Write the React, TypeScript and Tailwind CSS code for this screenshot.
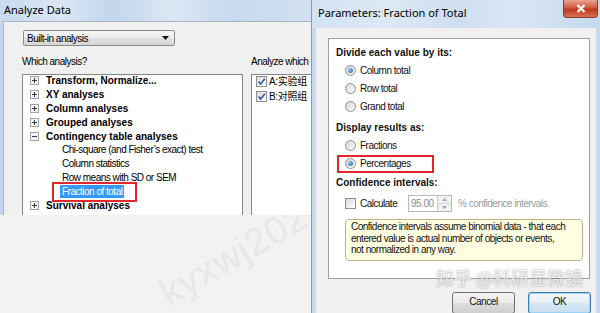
import React from 'react';

const ui = "font-['Liberation_Sans','Noto_Sans_CJK_SC',sans-serif]";

const PlusBox = ({ open }: { open?: boolean }) => (
  <svg width="9" height="9" viewBox="0 0 9 9" className="shrink-0">
    <rect x="0.5" y="0.5" width="8" height="8" fill="#f4f4f4" stroke="#a3a3a3" />
    <line x1="2" y1="4.5" x2="7" y2="4.5" stroke="#3a3a3a" />
    {!open && <line x1="4.5" y1="2" x2="4.5" y2="7" stroke="#3a3a3a" />}
  </svg>
);

const Radio = ({ checked }: { checked?: boolean }) => (
  <span className="flex h-[11px] w-[11px] shrink-0 items-center justify-center rounded-full border border-[#8e8f8f] bg-[linear-gradient(135deg,#d6d6d6,#fbfbfb)]">
    {checked && (
      <span className="h-[5px] w-[5px] rounded-full bg-[radial-gradient(circle_at_35%_35%,#8fc4f5,#1c5aa6)]" />
    )}
  </span>
);

const Check = ({ checked }: { checked?: boolean }) => (
  <span className="flex h-[11px] w-[11px] shrink-0 items-center justify-center border border-[#8e8f8f] bg-[linear-gradient(135deg,#d9d9d9,#ffffff)]">
    {checked && (
      <svg width="9" height="9" viewBox="0 0 9 9">
        <path d="M1.5 4.5 L3.7 7 L7.8 1.8" fill="none" stroke="#2a5aa8" strokeWidth="1.6" />
      </svg>
    )}
  </span>
);

const groups = [
  { label: 'Transform, Normalize...' },
  { label: 'XY analyses' },
  { label: 'Column analyses' },
  { label: 'Grouped analyses' },
  {
    label: 'Contingency table analyses',
    open: true,
    children: ['Chi-square (and Fisher\u2019s exact) test', 'Column statistics', 'Row means with SD or SEM', 'Fraction of total'],
  },
  { label: 'Survival analyses' },
];

const AnalyzeWindow = () => (
  <div className="absolute left-0 top-0 flex h-[215px] w-[330px] flex-col overflow-hidden">
    <div className="flex h-[21px] shrink-0 items-center pl-[4px] bg-[linear-gradient(90deg,#c6d9ee_0%,#dbe7f4_18%,#c1d5eb_34%,#dce8f5_52%,#c6d9ee_70%,#d5e3f2_100%)]">
      <span className="font-['Noto_Sans',sans-serif] text-[11px] text-black">Analyze Data</span>
    </div>
    <div className="flex flex-1">
      <div className="w-[3px] shrink-0 bg-[#c3d6ec]" />
      <div className={`min-w-0 flex-1 overflow-hidden border-l border-t border-[#a9b4c2] bg-[#f0f0f0] pl-[18px] pt-[8px] text-[10px] text-black ${ui}`}>
        <div className="ml-[1px] flex h-[16px] w-[152px] items-center justify-between rounded-[2px] border border-[#8a8a8a] bg-[linear-gradient(#f6f6f6,#ececec_50%,#e0e0e0_50%,#d6d6d6)] pl-[3px] pr-[5px]">
          <span className="tracking-[-0.5px]">Built-in analysis</span>
          <svg width="7" height="4" viewBox="0 0 7 4">
            <path d="M0 0 H7 L3.5 4 Z" fill="#111" />
          </svg>
        </div>
        <div className="mt-[6px] flex h-[18px] items-center whitespace-nowrap tracking-[-0.5px]">
          <span className="w-[229px] shrink-0">Which analysis?</span>
          <span>Analyze which data sets?</span>
        </div>
        <div className="mt-[4px] flex gap-[8px]">
          <div className="h-[141px] w-[221px] shrink-0 border-l border-r border-t border-[#828790] bg-white">
            <div className="-mt-[1px]">
              {groups.map((g) => (
                <React.Fragment key={g.label}>
                  <div className="flex h-[13.8px] items-center pl-[7px]">
                    <PlusBox open={g.open} />
                    <span className="ml-[7px] font-bold">{g.label}</span>
                  </div>
                  {g.children?.map((c) => {
                    const sel = c === 'Fraction of total';
                    return (
                      <div key={c} className="relative flex h-[13.8px] items-center pl-[37px] tracking-[-0.5px]">
                        {sel ? (
                          <>
                            <span className="flex h-[13px] items-center bg-[#3399ff] px-[2px] text-white">{c}</span>
                            <span className="absolute left-[29px] top-[-2px] h-[20px] w-[85px] border-2 border-[#e3262b]" />
                          </>
                        ) : (
                          <span className="px-[2px]">{c}</span>
                        )}
                      </div>
                    );
                  })}
                </React.Fragment>
              ))}
            </div>
          </div>
          <div className="h-[141px] w-[80px] shrink-0 border-l border-t border-[#828790] bg-white pl-[4px]">
            {['A:实验组', 'B:对照组'].map((t, i) => (
              <div key={t} className={`flex h-[15px] items-center gap-[2px] ${i === 0 ? '-mt-[1px]' : ''}`}>
                <Check checked />
                <span className="whitespace-nowrap tracking-[-0.3px]">{t}</span>
              </div>
            ))}
          </div>
        </div>
      </div>
    </div>
  </div>
);

const ParamsDialog = () => (
  <div className={`absolute left-[311px] top-0 flex h-[313px] w-[289px] flex-col text-[10px] text-[#111] ${ui}`}>
    <div className="flex h-[28px] shrink-0 items-start justify-between border-l border-[#7f9dbf] bg-[linear-gradient(90deg,#d3e2f2_0%,#dce8f5_25%,#cfdff0_50%,#d9e6f4_70%,#c5d9ee_100%)] pl-[6px]">
      <span className="pt-[5px] font-['Noto_Sans',sans-serif] text-[11px] text-black">Parameters: Fraction of Total</span>
      <div className="mr-[2px] flex h-[18px] w-[35px] items-center justify-center rounded-b-[4px] border border-t-0 border-[#8b3b2b] bg-[linear-gradient(#e9a48f,#d25a41_45%,#c0361f_55%,#d67355)]">
        <svg width="10" height="9" viewBox="0 0 10 9">
          <path d="M1.5 1 L8.5 8 M8.5 1 L1.5 8" stroke="#fff" strokeWidth="2.2" />
        </svg>
      </div>
    </div>
    <div className="flex flex-1">
      <div className="w-[5px] shrink-0 border-l border-[#7f9dbf] bg-[#c7d9ed]" />
      <div className="min-w-0 flex-1 bg-[#f0f0f0] pl-[12px] pt-[10px]">
        <div className="h-[241px] w-[262px] border border-[#a0a0a0] bg-white pl-[7px]">
          <div className="mt-[4px] flex h-[18px] items-center font-bold">Divide each value by its:</div>
          {['Column total', 'Row total', 'Grand total'].map((t, i) => (
            <div key={t} className="flex h-[18px] items-center gap-[4px] pl-[9px] tracking-[-0.5px]">
              <Radio checked={i === 0} />
              <span>{t}</span>
            </div>
          ))}
          <div className="mt-[3px] flex h-[18px] items-center font-bold">Display results as:</div>
          <div className="flex h-[18px] items-center gap-[4px] pl-[9px] tracking-[-0.5px]">
            <Radio />
            <span>Fractions</span>
          </div>
          <div className="relative flex h-[18px] items-center gap-[4px] pl-[9px] tracking-[-0.5px]">
            <Radio checked />
            <span>Percentages</span>
            <span className="absolute left-[1px] top-[1px] h-[18px] w-[97px] border-2 border-[#e3262b]" />
          </div>
          <div className="mt-[1px] flex h-[18px] items-center font-bold">Confidence intervals:</div>
          <div className="mt-[3px] flex h-[18px] items-center pl-[9px] tracking-[-0.5px]">
            <Check />
            <span className="ml-[4px] w-[48px]">Calculate</span>
            <div className="flex h-[17px] w-[44px] border border-[#b5b9c0] bg-white">
              <span className="flex flex-1 items-center pl-[2px] text-[#8c8c8c]">95.00</span>
              <div className="flex w-[14px] flex-col border-l border-[#c7c7c7]">
                <div className="flex flex-1 items-center justify-center border-b border-[#d2d2d2] bg-[#f1f1f1]">
                  <svg width="5" height="3" viewBox="0 0 5 3"><path d="M0 3 H5 L2.5 0 Z" fill="#a8a8a8" /></svg>
                </div>
                <div className="flex flex-1 items-center justify-center bg-[#f1f1f1]">
                  <svg width="5" height="3" viewBox="0 0 5 3"><path d="M0 0 H5 L2.5 3 Z" fill="#a8a8a8" /></svg>
                </div>
              </div>
            </div>
            <span className="ml-[6px] text-[#9a9a9a]">% confidence intervals.</span>
          </div>
          <div className="ml-[9px] mt-[7px] h-[42px] w-[238px] rounded-[4px] border border-[#bdb57f] bg-[#ffffe1] pl-[5px] pt-[1px] leading-[11.5px] tracking-[-0.5px]">
            Confidence intervals assume binomial data - that each
            <br />
            entered value is actual number of objects or events,
            <br />
            not normalized in any way.
          </div>
        </div>
        <div className="mt-[13px] flex justify-end gap-[13px] pr-[5px]">
          <div className="flex h-[22px] w-[63px] items-center justify-center rounded-[3px] border border-[#707070] bg-[linear-gradient(#f4f4f4,#ebebeb_50%,#dddddd_50%,#cfcfcf)] pb-[3px] tracking-[-0.4px]">
            Cancel
          </div>
          <div className="flex h-[22px] w-[63px] items-center justify-center rounded-[3px] border border-[#3c7fb1] bg-[linear-gradient(#f3f8fc,#e6f0f8_50%,#d6e7f4_50%,#c7def0)] pb-[3px] shadow-[inset_0_0_0_1px_#9fd3f5] tracking-[-0.4px]">
            OK
          </div>
        </div>
      </div>
      <div className="w-[4px] shrink-0 bg-[#c7d9ed]" />
    </div>
  </div>
);

export default function App() {
  return (
    <div className="relative h-[313px] w-[600px] overflow-hidden bg-[#f2f2f2]">
      <div className="absolute left-[172px] top-[274px] origin-bottom-left rotate-[-30deg] font-['Liberation_Sans',sans-serif] text-[38px] leading-none tracking-[1px] text-[#e7e7e7]">
        kyxwj2020
      </div>
      <AnalyzeWindow />
      <ParamsDialog />
      <div className="absolute left-[436px] top-[268px] font-['Noto_Sans_CJK_SC',sans-serif] text-[18px] leading-none text-white/80 [text-shadow:0_0_2px_rgba(0,0,0,0.45)]">
        知乎 @科研显微镜
      </div>
    </div>
  );
}
